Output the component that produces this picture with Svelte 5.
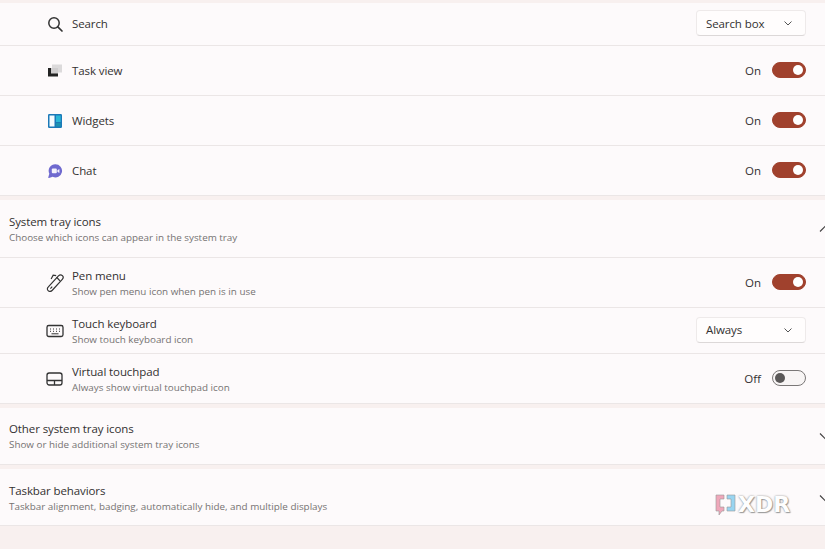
<script>
  const taskbarItems = [
    { label: "Search", icon: "search", select: "Search box", h: 43 },
    { label: "Task view", icon: "taskview", on: true, h: 50 },
    { label: "Widgets", icon: "widgets", on: true, h: 50 },
    { label: "Chat", icon: "chat", on: true, h: 50 }
  ];
  const trayItems = [
    { label: "Pen menu", sub: "Show pen menu icon when pen is in use", icon: "pen", on: true, h: 50 },
    { label: "Touch keyboard", sub: "Show touch keyboard icon", icon: "keyboard", select: "Always", h: 46 },
    { label: "Virtual touchpad", sub: "Always show virtual touchpad icon", icon: "touchpad", on: false, h: 50 }
  ];
</script>

{#snippet icon(name)}
  <svg class="icon" width="18" height="18" viewBox="0 0 18 18" fill="none" stroke="#333" stroke-width="1.3">
    {#if name === "search"}
      <circle cx="8" cy="8" r="5.2" stroke-width="1.5" />
      <path d="M11.8 11.8 16 16" stroke-width="1.7" stroke-linecap="round" />
    {:else if name === "taskview"}
      <rect x="6" y="2.5" width="10" height="8" fill="#dcdadb" stroke="none" />
      <rect x="2" y="6" width="10" height="8.5" fill="#232323" stroke="none" />
      <rect x="5" y="6" width="7" height="5.5" fill="#cfcdce" stroke="none" />
    {:else if name === "widgets"}
      <rect x="2" y="2" width="14" height="14" rx="1.2" fill="#1b79b8" stroke="none" />
      <rect x="3.5" y="3.5" width="5" height="11" fill="#f4fbfe" stroke="none" />
      <rect x="10" y="3.5" width="4.7" height="6.5" fill="#2ab7d6" stroke="none" />
      <rect x="10" y="11" width="4.7" height="3.5" fill="#1a92b0" stroke="none" />
    {:else if name === "chat"}
      <path d="M9.4 2.2a6.6 6.6 0 1 1-2.7 12.6L3 15.9c-.5.1-.8-.2-.7-.7l1-3.5A6.6 6.6 0 0 1 9.4 2.2Z" fill="#6f69cf" stroke="none" />
      <rect x="5.8" y="6.6" width="5" height="4.6" rx="1" fill="#f3f1fc" stroke="none" />
      <path d="m11.4 8.2 2-1.2v4l-2-1.2Z" fill="#f3f1fc" stroke="none" />
    {:else if name === "pen"}
      <g transform="translate(-1.6 -1.3) scale(1.2)">
        <path d="M3.3 11.8 11.7 2.6c1-1 2.4-1 3.300-.2.9.9.8 2.2-.1 3.2l-8.300 9c-1 1-2.500 1.200-3.500.3-.9-.8-.8-2.100.2-3.100Z" stroke-width="1" />
        <path d="M9.8 2.400 7.300 2 5.600 5.200M13 6.800l-2.800-3M5 13.200l1.500-1.600" stroke-width="1" />
      </g>
    {:else if name === "keyboard"}
      <rect x="1" y="3.5" width="16" height="11" rx="1.8" />
      <path d="M4 7h1m2 0h1m2 0h1m2 0h1M4 9.300h1m2 0h1m2 0h1m2 0h1M5.500 11.800h7" stroke-width="1" />
    {:else if name === "touchpad"}
      <rect x="1" y="3" width="15" height="12" rx="2.2" />
      <path d="M1 10.500h15M8.500 10.500V15" />
    {/if}
  </svg>
{/snippet}

{#snippet control(item)}
  {#if item.select}
    <div class="select">
      <span>{item.select}</span>
      <svg width="10" height="10" viewBox="0 0 10 10" fill="none" stroke="#555" stroke-width="1"><path d="m1.500 3.500 3.500 3.500 3.500-3.500" /></svg>
    </div>
  {:else}
    <span class="state">{item.on ? "On" : "Off"}</span>
    <span class="toggle" class:on={item.on}><span class="knob"></span></span>
  {/if}
{/snippet}

{#snippet chevron(up)}
  <svg class="chevron" width="12" height="12" viewBox="0 0 12 12" fill="none" stroke="#444" stroke-width="1.2">
    <path d={up ? "m1 8.500 5-5 5 5" : "m1 3.500 5 5 5-5"} />
  </svg>
{/snippet}

<main class="page">
  <section class="group first">
    {#each taskbarItems as item}
      <div class="row sub" style="height: {item.h}px">
        {@render icon(item.icon)}
        <div class="text"><div class="label">{item.label}</div></div>
        {@render control(item)}
      </div>
    {/each}
  </section>

  <section class="group">
    <div class="row head tray">
      <div class="text">
        <div class="label">System tray icons</div>
        <div class="desc">Choose which icons can appear in the system tray</div>
      </div>
      {@render chevron(true)}
    </div>
    {#each trayItems as item}
      <div class="row sub" style="height: {item.h}px">
        {@render icon(item.icon)}
        <div class="text">
          <div class="label">{item.label}</div>
          <div class="desc">{item.sub}</div>
        </div>
        {@render control(item)}
      </div>
    {/each}
  </section>

  <section class="group">
    <div class="row head">
      <div class="text">
        <div class="label">Other system tray icons</div>
        <div class="desc">Show or hide additional system tray icons</div>
      </div>
      {@render chevron(false)}
    </div>
  </section>

  <section class="group last">
    <div class="row head behaviors">
      <div class="text">
        <div class="label">Taskbar behaviors</div>
        <div class="desc">Taskbar alignment, badging, automatically hide, and multiple displays</div>
      </div>
      {@render chevron(false)}
    </div>
    <div class="watermark">
      <svg width="26" height="28" viewBox="0 0 26 28" fill="none">
        <path d="M11 4H3v16h3v4l3-4h2v-4H7V8h4Z" fill="#ee9fb3" stroke="#8d8d8d" stroke-width=".6" />
        <path d="M14 4h8v16h-8v-4h4V8h-4Z" fill="#8fd2f0" stroke="#8d8d8d" stroke-width=".6" />
      </svg>
      <span>XDR</span>
    </div>
  </section>
</main>

<style>
  :global(body) {
    margin: 0;
    background: #f8f0ef;
    overflow: hidden;
  }
  .page {
    width: 825px;
    height: 549px;
    overflow: hidden;
    padding-top: 3px;
    box-sizing: border-box;
    font-family: "Open Sans", "Noto Sans", sans-serif;
    color: #333131;
    font-size: 11.5px;
  }
  .group {
    position: relative;
    background: #fdfafb;
    margin-bottom: 4px;
  }
  .row {
    display: flex;
    align-items: center;
    box-sizing: border-box;
    border-bottom: 1px solid #ebe6e6;
  }
  .sub {
    padding: 0 19px 0 46px;
  }
  .head {
    height: 57px;
    padding: 0 0 0 9px;
  }
  .head.tray {
    height: 58px;
  }
  .head.behaviors {
    padding-top: 1px;
  }
  .icon {
    flex: none;
    margin-right: 8px;
  }
  .text {
    flex: 1;
    min-width: 0;
  }
  .label {
    line-height: 16px;
    letter-spacing: -0.1px;
  }
  .desc {
    font-size: 9.85px;
    line-height: 14px;
    color: #757272;
  }
  .chevron {
    margin-right: -6px;
    flex: none;
  }
  .select {
    width: 110px;
    height: 26px;
    box-sizing: border-box;
    display: flex;
    align-items: center;
    justify-content: space-between;
    padding: 0 12px 0 9px;
    background: #fffdfd;
    border: 1px solid #eeeaea;
    border-bottom-color: #dcd8d8;
    border-radius: 4px;
    margin-top: -2px;
    letter-spacing: -0.1px;
  }
  .state {
    margin-right: 11px;
  }
  .toggle {
    width: 34px;
    height: 16px;
    box-sizing: border-box;
    border: 1px solid #7a7777;
    border-radius: 9px;
    display: flex;
    align-items: center;
    padding: 0 2px;
    background: #f8f5f5;
    margin-top: -1px;
  }
  .toggle.on {
    background: #a0412d;
    border-color: #a0412d;
    justify-content: flex-end;
  }
  .knob {
    width: 10px;
    height: 10px;
    border-radius: 50%;
    background: #5a5858;
  }
  .toggle.on .knob {
    background: #fff;
  }
  .watermark {
    position: absolute;
    left: 713px;
    top: 22px;
    display: flex;
    align-items: center;
    height: 28px;
    opacity: 0.9;
  }
  .watermark span {
    font-family: "DejaVu Sans", sans-serif;
    font-size: 22px;
    font-weight: 700;
    color: #fff;
    line-height: 1;
    margin-left: -1px;
    text-shadow: 0 0 2px #777, 1px 1px 1px #999;
  }
</style>
